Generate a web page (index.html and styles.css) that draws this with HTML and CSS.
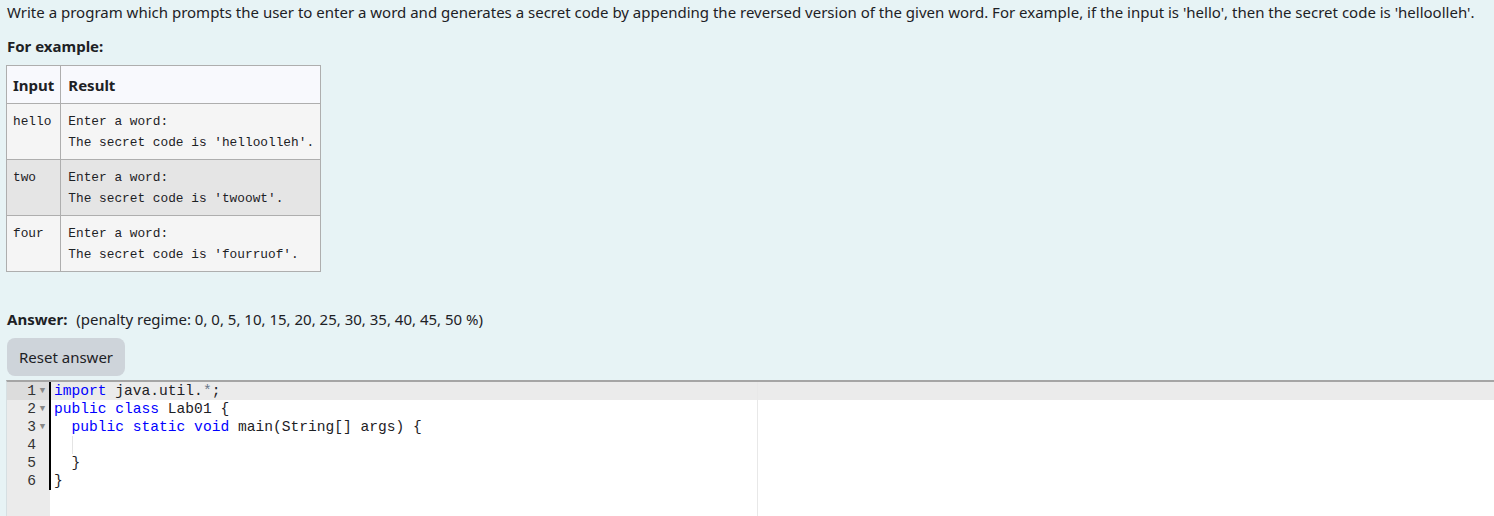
FILE: index.html
```html
<!DOCTYPE html>
<html>
  <head>
    <title>Secret code</title>
    <link rel="stylesheet" href="styles.css">
  </head>
  <body>
    <div class="question">
      <p class="qtext">
        Write a program which prompts the user to enter a word and generates a secret code by appending the reversed version of the given word. For example, if the input is 'hello', then the secret code is 'helloolleh'.
      </p>
      <p class="for-example">For example:</p>

      <table class="examples">
        <thead>
          <tr>
            <th class="col-input">Input</th>
            <th class="col-result">Result</th>
          </tr>
        </thead>
        <tbody>
          <tr class="r0">
            <td><pre>hello</pre></td>
            <td><pre>Enter a word:
The secret code is 'helloolleh'.</pre></td>
          </tr>
          <tr class="r1">
            <td><pre>two</pre></td>
            <td><pre>Enter a word:
The secret code is 'twoowt'.</pre></td>
          </tr>
          <tr class="r0">
            <td><pre>four</pre></td>
            <td><pre>Enter a word:
The secret code is 'fourruof'.</pre></td>
          </tr>
        </tbody>
      </table>

      <p class="answer-label"><b>Answer:</b> <span class="penalty">(penalty regime: 0, 0, 5, 10, 15, 20, 25, 30, 35, 40, 45, 50 %)</span></p>

      <button class="btn-reset">Reset answer</button>

      <div class="editor">
        <div class="gutter">
          <div class="gl active">1<span class="fold">&#9660;</span></div>
          <div class="gl">2<span class="fold">&#9660;</span></div>
          <div class="gl">3<span class="fold">&#9660;</span></div>
          <div class="gl">4<span class="fold"></span></div>
          <div class="gl">5<span class="fold"></span></div>
          <div class="gl">6<span class="fold"></span></div>
        </div>
        <div class="code">
          <div class="print-margin"></div>
          <div class="cursor"></div>
          <div class="line active"><span class="kw">import</span> java.util.<span class="op">*</span>;</div>
          <div class="line"><span class="kw">public class</span> Lab01 {</div>
          <div class="line">  <span class="kw">public static void</span> main(String[] args) {</div>
          <div class="line"><span class="indent">  </span></div>
          <div class="line">  }</div>
          <div class="line">}</div>
        </div>
      </div>
    </div>
  </body>
</html>
```

FILE: styles.css
```css
body {
  margin: 0;
  background: #e7f3f5;
  color: #1d2125;
  font-family: "Noto Sans", "Open Sans", sans-serif;
  font-size: 15px;
  overflow: hidden;
}
.question {
  padding: 0 0 0 7px;
}
.qtext {
  margin: 0;
  padding-top: 1px;
  line-height: 22px;
}
.for-example {
  margin: 12px 0 0 0;
  font-weight: bold;
  line-height: 22px;
}
.examples {
  margin-top: 8px;
  border-collapse: collapse;
  margin-left: -1px;
}
.examples th,
.examples td {
  border: 1px solid #aeaeae;
  text-align: left;
  vertical-align: top;
}
.examples th {
  background: #f8f9fd;
  font-weight: bold;
  height: 37px;
  padding: 0 6px 0 6px;
  vertical-align: middle;
}
.examples td {
  padding: 7px 6px 6px 6px;
  height: 42px;
}
.examples td + td,
.examples th + th {
  padding-left: 7px;
}
.examples .r0 td {
  background: #f5f5f5;
}
.examples .r1 td {
  background: #e5e5e5;
}
.examples pre {
  margin: 0;
  font-family: "Liberation Mono", "DejaVu Sans Mono", monospace;
  font-size: 12.8px;
  line-height: 21px;
  color: #1d2125;
}
.answer-label {
  margin: 36px 0 0 0;
  line-height: 22px;
}
.penalty {
  margin-left: 5px;
}
.btn-reset {
  margin-top: 8px;
  display: block;
  background: #ced4da;
  color: #1d2125;
  border: none;
  border-radius: 8px;
  padding: 0 12px;
  height: 38px;
  font-family: inherit;
  font-size: 15px;
}
.editor {
  margin-top: 4px;
  margin-left: -1px;
  display: flex;
  border-top: 2px solid #a5a5a5;
  border-left: 1px solid #d6dfe2;
  height: 134px;
  background: #fff;
  font-family: "Liberation Mono", "DejaVu Sans Mono", monospace;
  font-size: 14.6px;
}
.gutter {
  width: 43px;
  background: #ebebeb;
  color: #333;
  flex: none;
}
.gl {
  height: 18px;
  line-height: 18px;
  text-align: right;
  padding-right: 1px;
}
.gl.active {
  background: #dcdcdc;
}
.fold {
  display: inline-block;
  width: 13px;
  text-align: center;
  font-size: 9px;
  vertical-align: top;
  color: #888;
}
.code {
  position: relative;
  flex: 1;
}
.line {
  height: 18px;
  line-height: 18px;
  white-space: pre;
  padding-left: 4px;
}
.line.active {
  background: #ebebeb;
}
.kw {
  color: #0000ff;
}
.op {
  color: #687687;
}
.indent {
  display: inline-block;
  height: 18px;
  border-right: 1px solid #e4e4e4;
  vertical-align: top;
}
.print-margin {
  position: absolute;
  left: 707px;
  top: 0;
  bottom: 0;
  width: 1px;
  background: #e8e8e8;
}
.cursor {
  position: absolute;
  left: -1px;
  top: 0;
  height: 108px;
  width: 2px;
  background: #000;
}
```
